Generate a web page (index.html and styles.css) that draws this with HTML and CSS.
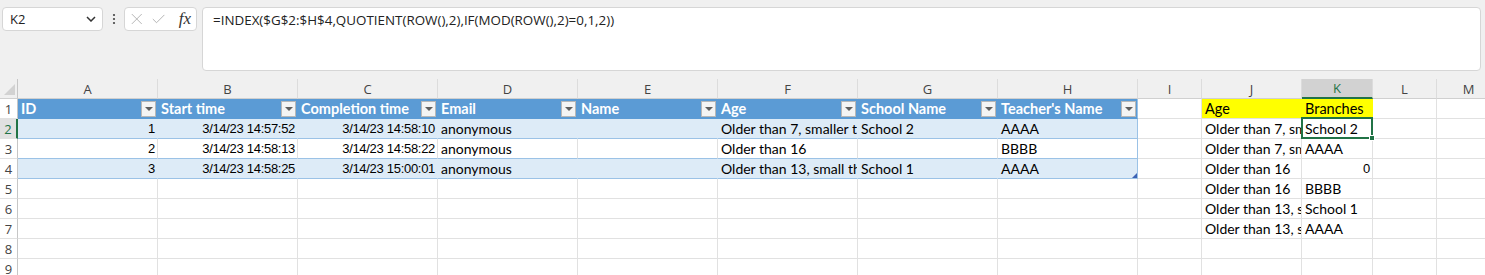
FILE: index.html
```html
<!DOCTYPE html>
<html lang="en">
<head>
  <meta charset="UTF-8">
  <title>Book1 - Excel</title>
  <link rel="stylesheet" href="styles.css">
</head>
<body>
  <!-- Formula bar -->
  <div class="toolbar">
    <div class="name-box">
      <span>K2</span>
      <svg width="10" height="6" viewBox="0 0 10 6"><path d="M1 1 L5 5 L9 1" fill="none" stroke="#333" stroke-width="1.5"/></svg>
    </div>
    <div class="dots">
      <svg width="4" height="12" viewBox="0 0 4 12"><circle cx="2" cy="2" r="1.1" fill="#444"/><circle cx="2" cy="6" r="1.1" fill="#444"/><circle cx="2" cy="10" r="1.1" fill="#444"/></svg>
    </div>
    <div class="fx-box">
      <svg width="14" height="14" viewBox="0 0 14 14"><path d="M1 1 L13 13 M13 1 L1 13" stroke="#a6a6a6" stroke-width="1"/></svg>
      <svg width="16" height="12" viewBox="0 0 16 12"><path d="M1 6 L5.5 10.5 L15 1" fill="none" stroke="#a6a6a6" stroke-width="1"/></svg>
      <span class="fx">fx</span>
    </div>
    <div class="formula">=INDEX($G$2:$H$4,QUOTIENT(ROW(),2),IF(MOD(ROW(),2)=0,1,2))</div>
  </div>

  <!-- Grid -->
  <div class="sheet">
    <div class="row col-heads">
      <div class="corner"><span class="select-all"></span></div>
      <div>A</div><div>B</div><div>C</div><div>D</div><div>E</div><div>F</div><div>G</div><div>H</div>
      <div>I</div><div>J</div><div class="active">K</div><div>L</div><div>M</div>
    </div>

    <div class="row">
      <div class="rh">1</div>
      <div class="th">ID<span class="filter"></span></div>
      <div class="th">Start time<span class="filter"></span></div>
      <div class="th">Completion time<span class="filter"></span></div>
      <div class="th">Email<span class="filter"></span></div>
      <div class="th">Name<span class="filter"></span></div>
      <div class="th">Age<span class="filter"></span></div>
      <div class="th">School Name<span class="filter"></span></div>
      <div class="th last">Teacher's Name<span class="filter"></span></div>
      <div></div>
      <div class="hl">Age</div>
      <div class="hl">Branches</div>
      <div></div><div></div>
    </div>

    <div class="row">
      <div class="rh active">2</div>
      <div class="band num">1</div>
      <div class="band num">3/14/23 14:57:52</div>
      <div class="band num">3/14/23 14:58:10</div>
      <div class="band">anonymous</div>
      <div class="band"></div>
      <div class="band">Older than 7, smaller than 13</div>
      <div class="band">School 2</div>
      <div class="band last">AAAA</div>
      <div></div>
      <div>Older than 7, smaller than 13</div>
      <div class="selected">School 2<span class="handle"></span></div>
      <div></div><div></div>
    </div>

    <div class="row">
      <div class="rh">3</div>
      <div class="plain num">2</div>
      <div class="plain num">3/14/23 14:58:13</div>
      <div class="plain num">3/14/23 14:58:22</div>
      <div class="plain">anonymous</div>
      <div class="plain"></div>
      <div class="plain">Older than 16</div>
      <div class="plain"></div>
      <div class="plain last">BBBB</div>
      <div></div>
      <div>Older than 7, smaller than 13</div>
      <div>AAAA</div>
      <div></div><div></div>
    </div>

    <div class="row">
      <div class="rh">4</div>
      <div class="band num">3</div>
      <div class="band num">3/14/23 14:58:25</div>
      <div class="band num">3/14/23 15:00:01</div>
      <div class="band">anonymous</div>
      <div class="band"></div>
      <div class="band">Older than 13, small than 16</div>
      <div class="band">School 1</div>
      <div class="band last resize">AAAA</div>
      <div></div>
      <div>Older than 16</div>
      <div class="num">0</div>
      <div></div><div></div>
    </div>

    <div class="row">
      <div class="rh">5</div>
      <div></div><div></div><div></div><div></div><div></div><div></div><div></div><div></div><div></div>
      <div>Older than 16</div>
      <div>BBBB</div>
      <div></div><div></div>
    </div>

    <div class="row">
      <div class="rh">6</div>
      <div></div><div></div><div></div><div></div><div></div><div></div><div></div><div></div><div></div>
      <div>Older than 13, small than 16</div>
      <div>School 1</div>
      <div></div><div></div>
    </div>

    <div class="row">
      <div class="rh">7</div>
      <div></div><div></div><div></div><div></div><div></div><div></div><div></div><div></div><div></div>
      <div>Older than 13, small than 16</div>
      <div>AAAA</div>
      <div></div><div></div>
    </div>

    <div class="row">
      <div class="rh">8</div>
      <div></div><div></div><div></div><div></div><div></div><div></div><div></div><div></div><div></div>
      <div></div><div></div><div></div><div></div>
    </div>

    <div class="row">
      <div class="rh">9</div>
      <div></div><div></div><div></div><div></div><div></div><div></div><div></div><div></div><div></div>
      <div></div><div></div><div></div><div></div>
    </div>
  </div>
</body>
</html>
```

FILE: styles.css
```css
/* Global */
:root {
  --ui-gray: #f0f0f0;
  --grid-line: #e1e1e1;
  --table-blue: #5b9bd5;
  --band-blue: #ddebf7;
  --line-blue: #9bc2e6;
  --excel-green: #217346;
}

* {
  margin: 0;
  padding: 0;
  box-sizing: border-box;
}

body {
  width: 1485px;
  height: 275px;
  overflow: hidden;
  background-color: white;
  color: #000;
  font-family: Lato, 'Liberation Sans', sans-serif;
}

/* Formula bar */
.toolbar {
  display: flex;
  align-items: flex-start;
  height: 79px;
  padding: 7px 4px 0 2px;
  background-color: var(--ui-gray);
  font-family: 'Open Sans', 'Liberation Sans', sans-serif;
  font-size: 13px;
  color: #222;
}

.name-box {
  display: flex;
  align-items: center;
  justify-content: space-between;
  width: 101px;
  height: 24px;
  padding: 0 6px 0 7px;
  background-color: white;
  border: 1px solid #d6d6d6;
  border-radius: 4px;
}

.dots {
  display: flex;
  align-items: center;
  justify-content: center;
  width: 21px;
  height: 24px;
}

.fx-box {
  display: flex;
  align-items: center;
  gap: 9px;
  width: 73px;
  height: 24px;
  padding: 0 5px 0 6px;
  background-color: white;
  border: 1px solid #d6d6d6;
  border-radius: 4px;
}

.fx {
  margin-left: 5px;
  font-family: 'Liberation Serif', serif;
  font-style: italic;
  font-size: 17px;
  color: #333;
}

.formula {
  flex: 1;
  height: 64px;
  margin-left: 5px;
  padding: 3px 10px;
  background-color: white;
  border: 1px solid #d6d6d6;
  border-radius: 4px;
  font-size: 13.4px;
}

/* Sheet */
.row {
  display: grid;
  grid-template-columns: 18px repeat(8, 140px) 64px 100px 71px 64px 64px;
  height: 20px;
}

.row > div {
  display: flex;
  align-items: center;
  padding: 0 3px;
  overflow: hidden;
  white-space: nowrap;
  border-right: 1px solid var(--grid-line);
  border-bottom: 1px solid var(--grid-line);
  font-size: 14px;
}

.col-heads {
  background-color: var(--ui-gray);
}

.col-heads > div {
  justify-content: center;
  border-right-color: #dcdcdc;
  border-bottom-color: #d0d0d0;
  font-family: 'Open Sans', 'Liberation Sans', sans-serif;
  font-size: 13px;
  color: #444;
}

.col-heads > .corner {
  justify-content: flex-end;
  align-items: flex-end;
  padding: 3px 2px;
  border-right-color: #c6c6c6;
}

.select-all {
  width: 0;
  height: 0;
  border-left: 11px solid transparent;
  border-bottom: 11px solid #d2d2d2;
}

.col-heads > .active {
  background-color: #d2d2d2;
  color: var(--excel-green);
  border-bottom: 2px solid var(--excel-green);
}

.row > .rh {
  justify-content: center;
  padding: 0;
  border-right-color: #c6c6c6;
  font-family: 'Open Sans', 'Liberation Sans', sans-serif;
  font-size: 13px;
  color: #444;
}

.row > .rh.active {
  background-color: #e1e1e1;
  color: var(--excel-green);
  border-right: 2px solid var(--excel-green);
}

/* Table */
.row > .th {
  justify-content: space-between;
  padding: 0 1px 0 3px;
  background-color: var(--table-blue);
  border-right-color: var(--table-blue);
  border-bottom-color: var(--table-blue);
  color: white;
  font-size: 14.5px;
  font-weight: 700;
}

.filter {
  display: flex;
  align-items: center;
  justify-content: center;
  flex: none;
  width: 15px;
  height: 16px;
  background-color: #f4f4f4;
  border: 1px solid #b8b8b8;
}

.filter:after {
  content: "";
  border-left: 4px solid transparent;
  border-right: 4px solid transparent;
  border-top: 4px solid #5f5f5f;
}

.row > .band {
  background-color: var(--band-blue);
  border-right-color: var(--band-blue);
  border-bottom-color: var(--line-blue);
}

.row > .plain {
  border-bottom-color: var(--line-blue);
}

.row > .last {
  border-right-color: var(--line-blue);
}

.row > .num {
  justify-content: flex-end;
  padding-right: 2px;
  font-family: 'Liberation Sans', Arial, sans-serif;
  font-size: 13px;
  letter-spacing: -0.3px;
}

.row > .resize {
  position: relative;
}

.resize:after {
  content: "";
  position: absolute;
  right: 0;
  bottom: 0;
  border-left: 5px solid transparent;
  border-bottom: 5px solid #3c62b4;
}

.row > .hl {
  background-color: #ffff00;
  border-right-color: #ffff00;
  font-size: 14.5px;
}

/* Active cell */
.row > .selected {
  position: relative;
  overflow: visible;
}

.selected:before {
  content: "";
  position: absolute;
  top: -2px;
  left: -1px;
  right: -1px;
  bottom: -1px;
  border: 2px solid var(--excel-green);
}

.handle {
  position: absolute;
  right: -3px;
  bottom: -3px;
  width: 6px;
  height: 6px;
  background-color: var(--excel-green);
  border: 1px solid white;
}
```
